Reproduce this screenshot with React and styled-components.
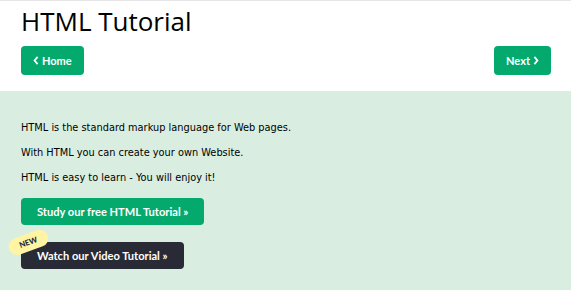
import styled, { createGlobalStyle } from 'styled-components'

const GlobalStyle = createGlobalStyle`
  html, body {
    margin: 0;
    padding: 0;
    background: #fff;
  }
`

const Page = styled.div`
  width: 571px;
  height: 290px;
  overflow: hidden;
  border-top: 1px solid #e6e6e6;
  box-sizing: border-box;
`

const Header = styled.header`
  padding: 3px 20px 0 21px;
  height: 90px;
  box-sizing: border-box;
`

const Title = styled.h1`
  margin: 0;
  font-family: 'Open Sans', sans-serif;
  font-weight: 400;
  font-size: 26px;
  line-height: 34px;
  color: #000;
`

const NavRow = styled.div`
  display: flex;
  justify-content: space-between;
  margin-top: 8px;
`

const NavButton = styled.a`
  display: inline-flex;
  align-items: center;
  gap: 3px;
  height: 29px;
  padding: 0 12px;
  background: #04aa6d;
  color: #fff;
  border-radius: 4px;
  font-family: 'Lato', sans-serif;
  font-weight: 700;
  font-size: 11px;
  text-decoration: none;
  box-sizing: border-box;
`

const Chevron = styled.svg`
  width: 6px;
  height: 9px;
`

const Intro = styled.section`
  background: #d9eee1;
  height: 200px;
  padding: 30px 21px 0;
  box-sizing: border-box;
`

const Text = styled.p`
  margin: 0 0 11px;
  font-family: 'DejaVu Sans', Verdana, sans-serif;
  font-size: 9.8px;
  line-height: 14px;
  color: #000;
`

const Actions = styled.div`
  display: flex;
  flex-direction: column;
  align-items: flex-start;
  gap: 17px;
  margin-top: 13px;
`

const CtaButton = styled.a`
  position: relative;
  display: inline-flex;
  align-items: center;
  height: 27px;
  padding: 0 16px;
  background: ${({ $dark }) => ($dark ? '#282a35' : '#04aa6d')};
  color: #fff;
  border-radius: 4px;
  font-family: 'Lato', sans-serif;
  font-weight: 700;
  font-size: 11.1px;
  text-decoration: none;
`

const Badge = styled.span`
  position: absolute;
  left: -13px;
  top: -8px;
  padding: 4px 11px;
  background: #fff4a3;
  color: #282a35;
  border-radius: 10px;
  font-family: 'Lato', sans-serif;
  font-weight: 900;
  font-size: 7.8px;
  line-height: 9px;
  transform: rotate(-20deg);
`

const ChevronLeft = () => (
  <Chevron viewBox="0 0 6 9">
    <path d="M4.6 0.9 L1.6 4.5 L4.6 8.1" fill="none" stroke="#fff" strokeWidth="1.8" />
  </Chevron>
)

const ChevronRight = () => (
  <Chevron viewBox="0 0 6 9">
    <path d="M1.4 0.9 L4.4 4.5 L1.4 8.1" fill="none" stroke="#fff" strokeWidth="1.8" />
  </Chevron>
)

export default function App() {
  return (
    <>
      <GlobalStyle />
      <Page>
        <Header>
          <Title>HTML Tutorial</Title>
          <NavRow>
            <NavButton href="#">
              <ChevronLeft />
              Home
            </NavButton>
            <NavButton href="#">
              Next
              <ChevronRight />
            </NavButton>
          </NavRow>
        </Header>
        <Intro>
          <Text>HTML is the standard markup language for Web pages.</Text>
          <Text>With HTML you can create your own Website.</Text>
          <Text>HTML is easy to learn - You will enjoy it!</Text>
          <Actions>
            <CtaButton href="#">Study our free HTML Tutorial »</CtaButton>
            <CtaButton href="#" $dark>
              <Badge>NEW</Badge>
              Watch our Video Tutorial »
            </CtaButton>
          </Actions>
        </Intro>
      </Page>
    </>
  )
}
